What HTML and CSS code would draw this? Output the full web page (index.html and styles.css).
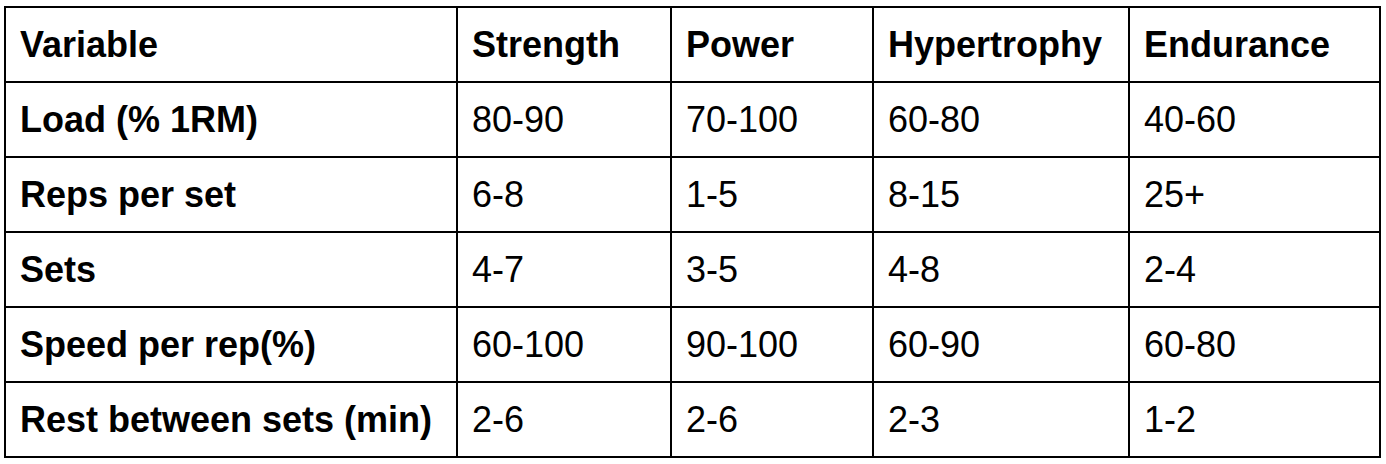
FILE: index.html
```html
<!DOCTYPE html>
<html>
<head>
<meta charset="utf-8">
<link rel="stylesheet" href="styles.css">
</head>
<body>
<table class="grid">
  <colgroup>
    <col class="c1"><col class="c2"><col class="c3"><col class="c4"><col class="c5">
  </colgroup>
  <tr class="head"><th>Variable</th><th>Strength</th><th>Power</th><th>Hypertrophy</th><th>Endurance</th></tr>
  <tr><th>Load (% 1RM)</th><td>80-90</td><td>70-100</td><td>60-80</td><td>40-60</td></tr>
  <tr><th>Reps per set</th><td>6-8</td><td>1-5</td><td>8-15</td><td>25+</td></tr>
  <tr><th>Sets</th><td>4-7</td><td>3-5</td><td>4-8</td><td>2-4</td></tr>
  <tr><th>Speed per rep(%)</th><td>60-100</td><td>90-100</td><td>60-90</td><td>60-80</td></tr>
  <tr><th>Rest between sets (min)</th><td>2-6</td><td>2-6</td><td>2-3</td><td>1-2</td></tr>
</table>
</body>
</html>
```
FILE: styles.css
```css
html, body {
  margin: 0;
  background: #fff;
}
body {
  padding: 6px 0 0 4px;
  font-family: "Liberation Sans", Arial, sans-serif;
  color: #000;
}
.grid {
  border-collapse: collapse;
  table-layout: fixed;
  width: 1377px;
}
.c1 { width: 452px; }
.c2 { width: 214px; }
.c3 { width: 202px; }
.c4 { width: 256px; }
.c5 { width: 251px; }
.grid th, .grid td {
  border: 2px solid #000;
  height: 75px;
  padding: 0 0 0 14px;
  text-align: left;
  vertical-align: middle;
  font-size: 36px;
  line-height: 40px;
  white-space: nowrap;
  box-sizing: border-box;
}
.grid th { font-weight: bold; }
.grid td { font-weight: normal; }
```
